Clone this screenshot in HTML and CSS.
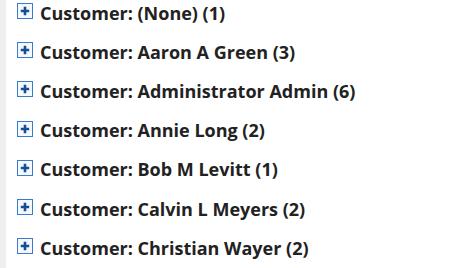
FILE: index.html
```html
<!DOCTYPE html>
<html>
<head>
<meta charset="utf-8">
<link rel="stylesheet" href="styles.css">
</head>
<body>
<div class="page">
  <div class="strip"></div>
  <ul class="list">
    <li class="row"><span class="toggle"><svg viewBox="0 0 16 16" width="16" height="16"><rect x="0.5" y="0.5" width="15" height="15" fill="#f5f9fd" stroke="#3a7cc6"/><path d="M8 3.8v8.4M3.8 8h8.4" stroke="#134f92" stroke-width="2.6"/></svg></span><span class="label">Customer: (None) (1)</span></li>
    <li class="row"><span class="toggle"><svg viewBox="0 0 16 16" width="16" height="16"><rect x="0.5" y="0.5" width="15" height="15" fill="#f5f9fd" stroke="#3a7cc6"/><path d="M8 3.8v8.4M3.8 8h8.4" stroke="#134f92" stroke-width="2.6"/></svg></span><span class="label">Customer: Aaron A Green (3)</span></li>
    <li class="row"><span class="toggle"><svg viewBox="0 0 16 16" width="16" height="16"><rect x="0.5" y="0.5" width="15" height="15" fill="#f5f9fd" stroke="#3a7cc6"/><path d="M8 3.8v8.4M3.8 8h8.4" stroke="#134f92" stroke-width="2.6"/></svg></span><span class="label">Customer: Administrator Admin (6)</span></li>
    <li class="row"><span class="toggle"><svg viewBox="0 0 16 16" width="16" height="16"><rect x="0.5" y="0.5" width="15" height="15" fill="#f5f9fd" stroke="#3a7cc6"/><path d="M8 3.8v8.4M3.8 8h8.4" stroke="#134f92" stroke-width="2.6"/></svg></span><span class="label">Customer: Annie Long (2)</span></li>
    <li class="row"><span class="toggle"><svg viewBox="0 0 16 16" width="16" height="16"><rect x="0.5" y="0.5" width="15" height="15" fill="#f5f9fd" stroke="#3a7cc6"/><path d="M8 3.8v8.4M3.8 8h8.4" stroke="#134f92" stroke-width="2.6"/></svg></span><span class="label">Customer: Bob M Levitt (1)</span></li>
    <li class="row"><span class="toggle"><svg viewBox="0 0 16 16" width="16" height="16"><rect x="0.5" y="0.5" width="15" height="15" fill="#f5f9fd" stroke="#3a7cc6"/><path d="M8 3.8v8.4M3.8 8h8.4" stroke="#134f92" stroke-width="2.6"/></svg></span><span class="label">Customer: Calvin L Meyers (2)</span></li>
    <li class="row"><span class="toggle"><svg viewBox="0 0 16 16" width="16" height="16"><rect x="0.5" y="0.5" width="15" height="15" fill="#f5f9fd" stroke="#3a7cc6"/><path d="M8 3.8v8.4M3.8 8h8.4" stroke="#134f92" stroke-width="2.6"/></svg></span><span class="label">Customer: Christian Wayer (2)</span></li>
  </ul>
</div>
</body>
</html>
```
FILE: styles.css
```css
html, body { margin: 0; padding: 0; background: #fff; }
.page { display: flex; height: 268px; overflow: hidden; }
.strip { width: 6px; background: #efefef; flex: none; }
.list { list-style: none; margin: -7px 0 0 0; padding: 0 0 0 11px; display: flex; flex-direction: column; }
.row { display: flex; align-items: center; gap: 7px; height: 39.2px; flex: none; font-family: "Open Sans", sans-serif; font-weight: 700; font-size: 18px; color: #222; white-space: nowrap; }
.toggle { display: flex; width: 16px; height: 16px; margin-top: -3px; }
.label { line-height: 22px; }
```
